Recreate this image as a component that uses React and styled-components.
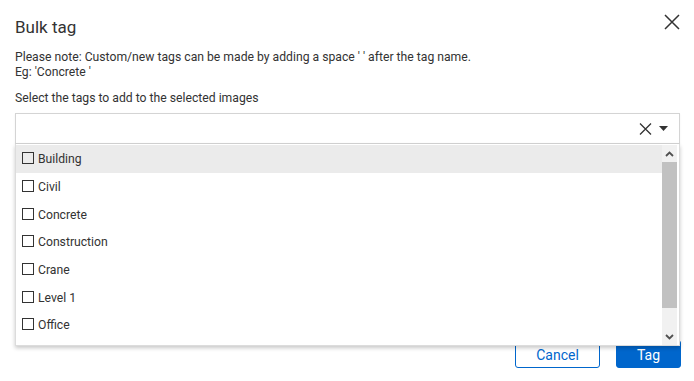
import React from "react";
import styled, { createGlobalStyle } from "styled-components";

const GlobalStyle = createGlobalStyle`
  body {
    margin: 0;
    background: #fff;
    font-family: Roboto, "Liberation Sans", sans-serif;
    color: #333;
  }
`;

const Dialog = styled.div`
  width: 694px;
  height: 381px;
  box-sizing: border-box;
  padding: 0 13px 0 15px;
  display: flex;
  flex-direction: column;
  overflow: hidden;
`;

const Header = styled.div`
  display: flex;
  justify-content: space-between;
  align-items: flex-start;
  padding-top: 16px;
`;

const Title = styled.h2`
  margin: 0;
  font-size: 17px;
  line-height: 22px;
  font-weight: 400;
  color: #333;
`;

const CloseButton = styled.button`
  border: 0;
  background: none;
  padding: 0;
  margin: -2px 1px 0 0;
  width: 16px;
  height: 16px;
  display: flex;
  cursor: pointer;
`;

const Note = styled.p`
  margin: 12px 0 0;
  font-size: 12.2px;
  line-height: 15px;
`;

const Label = styled.p`
  margin: 11px 0 0;
  font-size: 12.2px;
  line-height: 15px;
`;

const SelectWrap = styled.div`
  position: relative;
  margin-top: 7px;
  margin-right: 1px;
`;

const Input = styled.div`
  height: 31px;
  box-sizing: border-box;
  border: 1px solid #d4d4d4;
  box-shadow: 0 1px 2px rgba(0, 0, 0, 0.06);
  display: flex;
  align-items: center;
  justify-content: flex-end;
  gap: 7px;
  padding-right: 11px;
`;

const Menu = styled.div`
  position: absolute;
  top: 100%;
  left: 0;
  right: 0;
  height: 202px;
  box-sizing: border-box;
  border: 1px solid #dcdcdc;
  border-top: 0;
  background: #fff;
  box-shadow: 0 2px 4px rgba(0, 0, 0, 0.22);
  display: flex;
  padding-right: 2px;
  z-index: 2;
`;

const Options = styled.ul`
  flex: 1;
  margin: 1px 0 0;
  padding: 0;
  list-style: none;
  overflow: hidden;
`;

const Option = styled.li`
  height: 27.67px;
  display: flex;
  align-items: center;
  padding: 1px 0 0 6px;
  box-sizing: border-box;
  font-size: 12.2px;
  color: #333;
  background: ${(p) => (p.$active ? "#ebebeb" : "transparent")};
`;

const Box = styled.span`
  width: 12px;
  height: 12px;
  box-sizing: border-box;
  border: 1px solid #333;
  margin-right: 4px;
  margin-top: -2px;
`;

const Scrollbar = styled.div`
  width: 15px;
  margin-top: 1px;
  background: #f1f1f1;
  display: flex;
  flex-direction: column;
`;

const Arrow = styled.div`
  height: 17px;
  display: flex;
  align-items: center;
  justify-content: center;
`;

const Thumb = styled.div`
  height: 146px;
  background: #c1c1c1;
`;

const Track = styled.div`
  flex: 1;
`;

const Footer = styled.div`
  display: flex;
  justify-content: flex-end;
  gap: 16px;
  margin-top: 196px;
`;

const Button = styled.button`
  height: 28px;
  box-sizing: border-box;
  border-radius: 3px;
  border: 1px solid #0066cc;
  font-family: Roboto, "Liberation Sans", sans-serif;
  font-size: 14px;
  padding: 1px 0 0;
  width: ${(p) => p.$width}px;
  background: ${(p) => (p.$primary ? "#0066cc" : "#fff")};
  color: ${(p) => (p.$primary ? "#fff" : "#0066cc")};
`;

const tags = [
  "Building",
  "Civil",
  "Concrete",
  "Construction",
  "Crane",
  "Level 1",
  "Office",
];

export default function App() {
  return (
    <>
      <GlobalStyle />
      <Dialog>
        <Header>
          <Title>Bulk tag</Title>
          <CloseButton aria-label="Close">
            <svg width="16" height="16" viewBox="0 0 16 16">
              <path d="M1 1L15 15M15 1L1 15" stroke="#333" strokeWidth="1.5" />
            </svg>
          </CloseButton>
        </Header>
        <Note>
          Please note: Custom/new tags can be made by adding a space ' ' after the tag name.
          <br />
          Eg: 'Concrete '
        </Note>
        <Label>Select the tags to add to the selected images</Label>
        <SelectWrap>
          <Input>
            <svg width="13" height="12" viewBox="0 0 13 12">
              <path d="M1 0.5L12 11.5M12 0.5L1 11.5" stroke="#333" strokeWidth="1.3" />
            </svg>
            <svg width="9" height="5" viewBox="0 0 9 5">
              <path d="M0 0H9L4.5 5Z" fill="#333" />
            </svg>
          </Input>
          <Menu>
            <Options>
              {tags.map((t, i) => (
                <Option key={t} $active={i === 0}>
                  <Box />
                  {t}
                </Option>
              ))}
            </Options>
            <Scrollbar>
              <Arrow>
                <svg width="9" height="6" viewBox="0 0 9 6">
                  <path d="M1 5L4.5 1.5L8 5" stroke="#505050" strokeWidth="1.8" fill="none" />
                </svg>
              </Arrow>
              <Thumb />
              <Track />
              <Arrow>
                <svg width="9" height="6" viewBox="0 0 9 6">
                  <path d="M1 1L4.5 4.5L8 1" stroke="#505050" strokeWidth="1.8" fill="none" />
                </svg>
              </Arrow>
            </Scrollbar>
          </Menu>
        </SelectWrap>
        <Footer>
          <Button $width={85}>Cancel</Button>
          <Button $width={65} $primary>
            Tag
          </Button>
        </Footer>
      </Dialog>
    </>
  );
}
